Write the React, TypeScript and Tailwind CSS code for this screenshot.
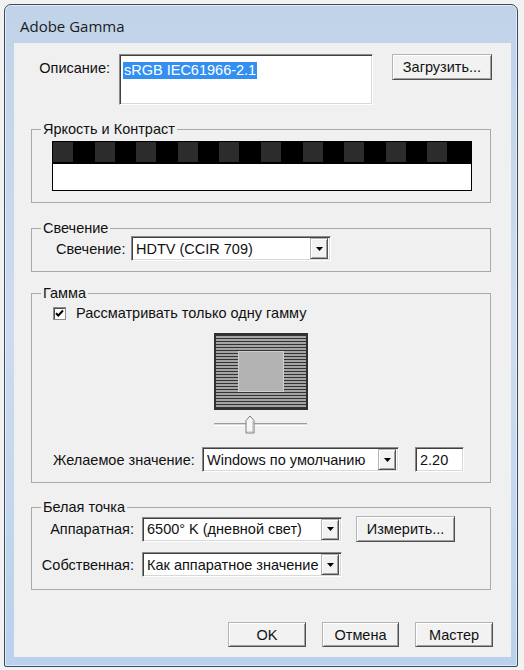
import React from "react";

// win-classic bevels
const raised =
  "border border-[#b4b4b4] border-r-[#505050] border-b-[#505050] bg-[#f2f2f2] shadow-[inset_1px_1px_0_#fff,inset_-1px_-1px_0_#a0a0a0]";
const sunken =
  "border border-[#8a8a8a] border-r-white border-b-white bg-white shadow-[inset_1px_1px_0_#404040,inset_-1px_-1px_0_#d8d8d8]";

const txt = "text-[14.5px] leading-[16px]";

function Btn({ label, className }: { label: string; className: string }) {
  return (
    <button className={`${raised} ${className} ${txt} flex items-center justify-center text-[#111]`}>
      {label}
    </button>
  );
}

function Combo({ value, className }: { value: string; className: string }) {
  return (
    <div className={`${sunken} ${className} h-[25px] flex items-center pl-[4px] pr-[2px]`}>
      <span className={`${txt} flex-1 whitespace-nowrap overflow-hidden text-[#111]`}>{value}</span>
      <span className={`${raised} w-[18px] h-[21px] flex items-center justify-center shrink-0`}>
        <svg width="7" height="4" viewBox="0 0 7 4">
          <path d="M0 0h7L3.5 4z" fill="#000" />
        </svg>
      </span>
    </div>
  );
}

function Group({ title, className, children }: { title: string; className: string; children: React.ReactNode }) {
  return (
    <fieldset className="w-[460px] border border-[#a8a8a8]">
      <legend className={`${txt} ml-[9px] px-[2px] text-[#111]`}>{title}</legend>
      <div className={className}>{children}</div>
    </fieldset>
  );
}

const App: React.FC = () => {
  return (
    <div className="min-h-[670px] bg-[#f2f2f2] pt-[4px] pl-[4px] font-['Liberation_Sans',Arial,sans-serif] text-[#111]">
      <div className="w-[514px] h-[663px] rounded-t-[7px] rounded-b-[2px] border border-[#3b4b5c] bg-gradient-to-b from-[#c0d3e9] via-[#cddcee] to-[#b9d1ec] shadow-[inset_0_0_0_1px_rgba(255,255,255,0.55)] flex flex-col">
        {/* title bar */}
        <div className="h-[38px] flex items-center pl-[15px] pt-[4px] text-[15px] font-['Open_Sans',sans-serif] text-[#1b1b1b]">
          Adobe Gamma
        </div>

        {/* client area */}
        <div className="flex-1 ml-[9px] mr-[6px] mb-[9px] bg-[#f0f0f0] pt-[11px] pl-[17px]">
          {/* description */}
          <div className="flex items-start">
            <span className={`${txt} w-[79px] text-right mt-[6px]`}>Описание:</span>
            <div className={`${sunken} ml-[9px] w-[254px] h-[51px] pl-[3px] pt-[3px]`}>
              <span className="bg-[#3390f0] text-white text-[14.5px] leading-[17px] px-[1px] inline-block">sRGB IEC61966-2.1</span>
            </div>
            <Btn label="Загрузить..." className="ml-[19px] w-[100px] h-[26px]" />
          </div>

          {/* brightness & contrast */}
          <div className="mt-[16px]">
            <Group title="Яркость и Контраст" className="pl-[20px] pb-[11px]">
              <div className="mt-[4px] w-[420px] h-[50px] border border-black flex flex-col">
                <div className="h-[22px] bg-black">
                  <div className="w-[416px] h-[20px] bg-[repeating-linear-gradient(90deg,#2c2c2c_0_20px,#000_20px_41.6px)]" />
                </div>
                <div className="flex-1 bg-white" />
              </div>
            </Group>
          </div>

          {/* luminance */}
          <div className="mt-[17px]">
            <Group title="Свечение" className="pl-[24px] pb-[10px]">
              <div className="flex items-center">
                <span className={`${txt} w-[75px] whitespace-nowrap`}>Свечение:</span>
                <Combo value="HDTV (CCIR 709)" className="w-[200px]" />
              </div>
            </Group>
          </div>

          {/* gamma */}
          <div className="mt-[13px]">
            <Group title="Гамма" className="pl-[21px] pb-[10px]">
              <div className="mt-[4px] flex items-center h-[16px]">
                <span className="w-[13px] h-[13px] border border-[#8a8a8a] bg-white shadow-[inset_1px_1px_0_#505050] flex items-center justify-center">
                  <svg width="9" height="9" viewBox="0 0 9 9">
                    <path d="M1 4.2l2.3 2.3L8 1.5" fill="none" stroke="#000" strokeWidth="2" />
                  </svg>
                </span>
                <span className={`${txt} ml-[10px]`}>Рассматривать только одну гамму</span>
              </div>

              <div className="mt-[12px] flex flex-col items-center pr-[22px]">
                <div className="w-[94px] h-[77px] border-2 border-[#303030] bg-[repeating-linear-gradient(180deg,#333_0_1.3px,#a4a4a4_1.3px_3px)] flex items-center justify-center">
                  <div className="w-[46px] h-[41px] bg-[#b3b3b3] border border-[#cfcfcf]" />
                </div>
                <div className="mt-[5px] w-[93px] h-[19px] flex items-center relative">
                  <div className="w-full h-[3px] border-t border-[#9c9c9c] border-b border-b-white bg-[#d8d8d8]" />
                  <svg className="absolute left-[31px] top-0" width="10" height="19" viewBox="0 0 10 19">
                    <path d="M1 18V5.5L5 1l4 4.5V18z" fill="#f6f6f6" stroke="#7c7c7c" />
                    <path d="M8 6v11H2" fill="none" stroke="#b8b8b8" />
                  </svg>
                </div>
              </div>

              <div className="mt-[13px] flex items-center">
                <span className={`${txt} w-[149px]`}>Желаемое значение:</span>
                <Combo value="Windows по умолчанию" className="w-[197px]" />
                <div className={`${sunken} ${txt} ml-[16px] w-[49px] h-[25px] pl-[4px] flex items-center`}>
                  2.20
                </div>
              </div>
            </Group>
          </div>

          {/* white point */}
          <div className="mt-[16px]">
            <Group title="Белая точка" className="pb-[12px]">
              <div className="mt-[1px] h-[26px] flex items-center">
                <span className={`${txt} w-[102px] text-right`}>Аппаратная:</span>
                <Combo value="6500° K (дневной свет)" className="ml-[8px] w-[200px]" />
                <Btn label="Измерить..." className="ml-[14px] w-[99px] h-[26px]" />
              </div>
              <div className="mt-[10px] flex items-center">
                <span className={`${txt} w-[102px] text-right`}>Собственная:</span>
                <Combo value="Как аппаратное значение" className="ml-[8px] w-[200px]" />
              </div>
            </Group>
          </div>

          {/* dialog buttons */}
          <div className="mt-[32px] w-[462px] flex justify-end gap-[16px]">
            <Btn label="OK" className="w-[78px] h-[25px]" />
            <Btn label="Отмена" className="w-[77px] h-[25px]" />
            <Btn label="Мастер" className="w-[78px] h-[25px]" />
          </div>
        </div>
      </div>
    </div>
  );
};

export default App;
